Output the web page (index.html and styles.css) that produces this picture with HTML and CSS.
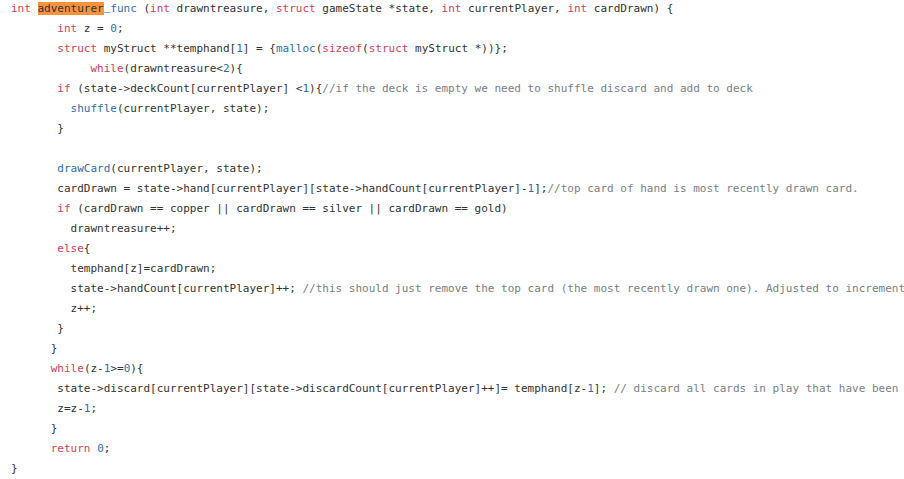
FILE: index.html
```html
<!DOCTYPE html>
<html>
<head>
<meta charset="utf-8">
<link rel="stylesheet" href="styles.css">
</head>
<body>
<pre class="code"><span class="k">int</span> <span class="hl">adventurer</span><span class="f"><span class="us">_</span>func</span> (<span class="k">int</span> drawntreasure, <span class="k">struct</span> gameState *state, <span class="k">int</span> currentPlayer, <span class="k">int</span> cardDrawn) {
       <span class="k">int</span> z = <span class="n">0</span>;
       <span class="k">struct</span> myStruct **temphand[<span class="n">1</span>] = {<span class="f">malloc</span>(<span class="k">sizeof</span>(<span class="k">struct</span> myStruct *))};
            <span class="k">while</span>(drawntreasure&lt;<span class="n">2</span>){
       <span class="k">if</span> (state-&gt;deckCount[currentPlayer] &lt;<span class="n">1</span>){<span class="c">//if the deck is empty we need to shuffle discard and add to deck</span>
         <span class="f">shuffle</span>(currentPlayer, state);
       }

       <span class="f">drawCard</span>(currentPlayer, state);
       cardDrawn = state-&gt;hand[currentPlayer][state-&gt;handCount[currentPlayer]-<span class="n">1</span>];<span class="c">//top card of hand is most recently drawn card.</span>
       <span class="k">if</span> (cardDrawn == copper || cardDrawn == silver || cardDrawn == gold)
         drawntreasure++;
       <span class="k">else</span>{
         temphand[z]=cardDrawn;
         state-&gt;handCount[currentPlayer]++; <span class="c">//this should just remove the top card (the most recently drawn one). Adjusted to increment instead of decrement</span>
         z++;
       }
      }
      <span class="k">while</span>(z-<span class="n">1</span>&gt;=<span class="n">0</span>){
       state-&gt;discard[currentPlayer][state-&gt;discardCount[currentPlayer]++]= temphand[z-<span class="n">1</span>]; <span class="c">// discard all cards in play that have been drawn</span>
       z=z-<span class="n">1</span>;
      }
      <span class="k">return</span> <span class="n">0</span>;
}</pre>
</body>
</html>
```

FILE: styles.css
```css
html, body {
  margin: 0;
  padding: 0;
  background: #ffffff;
  overflow: hidden;
}
.code {
  margin: -1px 0 0 0;
  padding: 0 0 0 11px;
  font-family: "DejaVu Sans Mono", "Liberation Mono", monospace;
  font-size: 11px;
  line-height: 20px;
  color: #333333;
  white-space: pre;
  overflow: hidden;
}
.k { color: #d2425a; }
.f { color: #2f6db3; }
.n { color: #2f6db3; }
.c { color: #7a7f85; }
.us {
  font-family: "Liberation Mono", monospace;
}
.hl {
  background: #f9923d;
  color: #333333;
}
```
